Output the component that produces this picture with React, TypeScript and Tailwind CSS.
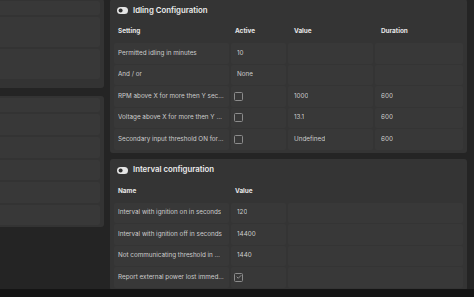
import { Check } from 'lucide-react';

type Cell = { text?: string; check?: boolean; checked?: boolean };

const idlingRows: Cell[][] = [
  [{ text: 'Permitted idling in minutes' }, { text: '10' }, {}, {}],
  [{ text: 'And / or' }, { text: 'None' }, {}, {}],
  [{ text: 'RPM above X for more then Y seconds' }, { check: true }, { text: '1000' }, { text: '600' }],
  [{ text: 'Voltage above X for more then Y seconds' }, { check: true }, { text: '13.1' }, { text: '600' }],
  [{ text: 'Secondary input threshold ON for more then Y seconds' }, { check: true }, { text: 'Undefined' }, { text: '600' }],
];

const intervalRows: Cell[][] = [
  [{ text: 'Interval with ignition on in seconds' }, { text: '120' }, {}],
  [{ text: 'Interval with ignition off in seconds' }, { text: '14400' }, {}],
  [{ text: 'Not communicating threshold in minutes' }, { text: '1440' }, {}],
  [{ text: 'Report external power lost immediately' }, { check: true, checked: true }, {}],
];

function ToggleIcon() {
  return (
    <svg width="11" height="7" viewBox="0 0 11 7" className="shrink-0">
      <rect x="0" y="0" width="11" height="7" rx="3.5" fill="#e4e4e4" />
      <circle cx="3.6" cy="3.5" r="2" fill="#2e2e2e" />
    </svg>
  );
}

function Checkbox({ checked }: { checked?: boolean }) {
  return (
    <div className="w-[9px] h-[9px] ml-[-3px] border border-[#8c8c8c] rounded-[1.5px] flex items-center justify-center shrink-0">
      {checked && <Check className="w-[6px] h-[6px] text-[#b0b0b0]" strokeWidth={3} />}
    </div>
  );
}

const cols4 = ['w-[115px]', 'w-[55px]', 'w-[85px]', 'flex-1'];
const cols3 = ['w-[115px]', 'w-[55px]', 'flex-1'];

function Panel({
  title,
  headers,
  rows,
  cols,
  className,
}: {
  title: string;
  headers: string[];
  rows: Cell[][];
  cols: string[];
  className?: string;
}) {
  return (
    <div className={`bg-[#343434] rounded-[3px] px-[4px] pb-[3px] ${className ?? ''}`}>
      <div className="h-[23px] flex items-center gap-[5px] pl-[3px]">
        <ToggleIcon />
        <span className="text-[7.8px] font-semibold text-[#ececec]">{title}</span>
      </div>
      <div className="h-[20px] flex items-center gap-[2px]">
        {headers.map((h, i) => (
          <div key={h} className={`${cols[i]} ${i <= 1 ? 'pl-[4px]' : 'pl-[6px]'} text-[6.4px] font-bold text-[#e6e6e6]`}>
            {h}
          </div>
        ))}
      </div>
      <div className="flex flex-col gap-[1px] mt-[1px]">
        {rows.map((row, r) => (
          <div key={r} className="h-[20.5px] flex gap-[2px]">
            {row.map((c, i) => (
              <div
                key={i}
                className={`${cols[i]} bg-[#383838] rounded-[2px] flex items-center min-w-0 ${i === 0 ? 'pl-[4px] pr-[4px]' : 'pl-[6px] pr-[2px]'}`}
              >
                {c.check ? (
                  <Checkbox checked={c.checked} />
                ) : (
                  <span className="text-[6.3px] text-[#cdcdcd] truncate">{c.text}</span>
                )}
              </div>
            ))}
          </div>
        ))}
      </div>
    </div>
  );
}

function SidePanel({ rows, className }: { rows: number[]; className?: string }) {
  return (
    <div className={`bg-[#333333] rounded-r-[3px] pr-[4px] py-[2px] flex flex-col gap-[2px] ${className ?? ''}`}>
      {rows.map((h, i) => (
        <div key={i} className="bg-[#383838] rounded-r-[2px]" style={{ height: h }} />
      ))}
    </div>
  );
}

export default function App() {
  return (
    <div
      className="w-[474px] h-[297px] overflow-hidden bg-[#242424] flex flex-col"
      style={{ fontFamily: 'Inter, "Noto Sans", sans-serif' }}
    >
      <div className="flex-1 flex gap-[6px] pr-[7px] mt-[-1px] min-h-0">
        <div className="w-[104px] flex flex-col gap-[8px]">
          <SidePanel rows={[14, 30, 30]} className="h-[89px]" />
          <SidePanel rows={[14, 21, 21, 21, 21, 20]} className="h-[131px]" />
        </div>
        <div className="flex-1 flex flex-col gap-[6px]">
          <Panel
            title="Idling Configuration"
            headers={['Setting', 'Active', 'Value', 'Duration']}
            rows={idlingRows}
            cols={cols4}
          />
          <Panel
            title="Interval configuration"
            headers={['Name', 'Value', '']}
            rows={intervalRows}
            cols={cols3}
          />
        </div>
      </div>
      <div className="h-[8px] bg-[#141414]" />
    </div>
  );
}
